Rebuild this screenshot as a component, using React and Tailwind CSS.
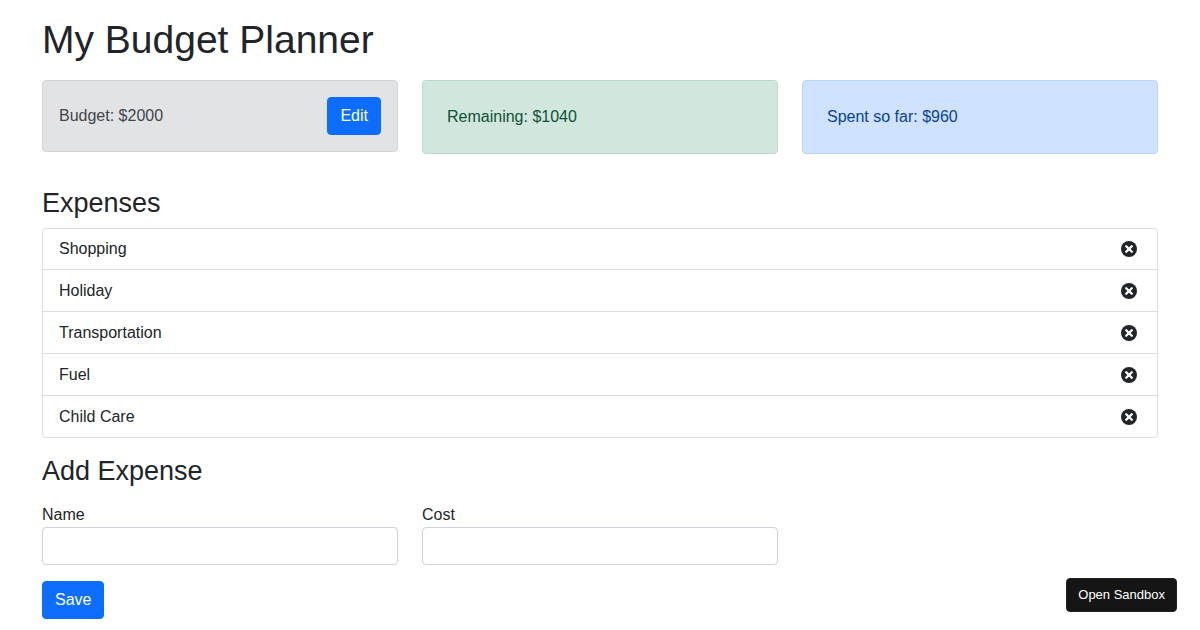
import { useState } from "react";

const initialExpenses = ["Shopping", "Holiday", "Transportation", "Fuel", "Child Care"];

const primaryButton =
  "rounded border border-[#0d6efd] bg-[#0d6efd] px-3 py-[6px] leading-6 text-white hover:bg-[#0b5ed7]";

function DeleteIcon() {
  return (
    <svg viewBox="0 0 24 24" className="size-6" aria-hidden="true">
      <circle cx="12" cy="12" r="8" fill="currentColor" />
      <path d="M9.2 9.2l5.6 5.6M14.8 9.2l-5.6 5.6" stroke="white" strokeWidth="2.3" strokeLinecap="round" />
    </svg>
  );
}

function Budget() {
  return (
    <div className="flex items-center justify-between rounded border border-[#d3d6d8] bg-[#e2e3e5] p-4 text-[#41464b]">
      <span>Budget: $2000</span>
      <button type="button" className={primaryButton}>Edit</button>
    </div>
  );
}

function Field({ id, label, type }) {
  return (
    <div className="flex flex-col">
      <label htmlFor={id} className="leading-6">{label}</label>
      <input
        id={id}
        type={type}
        className="h-[38px] w-full rounded border border-[#ced4da] bg-white px-3 outline-none focus:border-[#86b7fe]"
      />
    </div>
  );
}

export default function App() {
  const [expenses, setExpenses] = useState(initialExpenses);

  return (
    <div className="font-['Liberation_Sans',Arial,sans-serif] text-base leading-6 text-[#212529]">
      <main className="mx-auto max-w-[1140px] px-3 pt-4 pb-[11px]">
        <h1 className="text-[39px] leading-[48px]">My Budget Planner</h1>

        <section className="mt-4 grid grid-cols-3 items-start gap-x-6">
          <Budget />
          <div className="rounded border border-[#badbcc] bg-[#d1e7dd] p-6 text-[#0f5132]">
            Remaining: $1040
          </div>
          <div className="rounded border border-[#b6d4fe] bg-[#cfe2ff] p-6 text-[#084298]">
            Spent so far: $960
          </div>
        </section>

        <h2 className="mt-8 text-[27px] leading-[34px]">Expenses</h2>
        <ul className="mt-2 divide-y divide-[#dfdfdf] rounded border border-[#dfdfdf]">
          {expenses.map((name) => (
            <li key={name} className="flex h-[42px] items-center justify-between px-4 first:h-[41px] last:h-[41px]">
              <span>{name}</span>
              <button
                type="button"
                aria-label={`Delete ${name}`}
                onClick={() => setExpenses(expenses.filter((item) => item !== name))}
              >
                <DeleteIcon />
              </button>
            </li>
          ))}
        </ul>

        <h2 className="mt-4 text-[27px] leading-[34px]">Add Expense</h2>
        <form className="mt-[15px]" onSubmit={(event) => event.preventDefault()}>
          <div className="grid grid-cols-3 gap-x-6">
            <Field id="name" label="Name" type="text" />
            <Field id="cost" label="Cost" type="text" />
          </div>
          <button type="submit" className={`mt-4 ${primaryButton}`}>Save</button>
        </form>
      </main>

      <button
        type="button"
        className="fixed right-[23px] bottom-[18px] h-[34px] rounded border border-[#1f2327] bg-[#151515] px-[11px] text-[13px] leading-4 text-white"
      >
        Open Sandbox
      </button>
    </div>
  );
}
